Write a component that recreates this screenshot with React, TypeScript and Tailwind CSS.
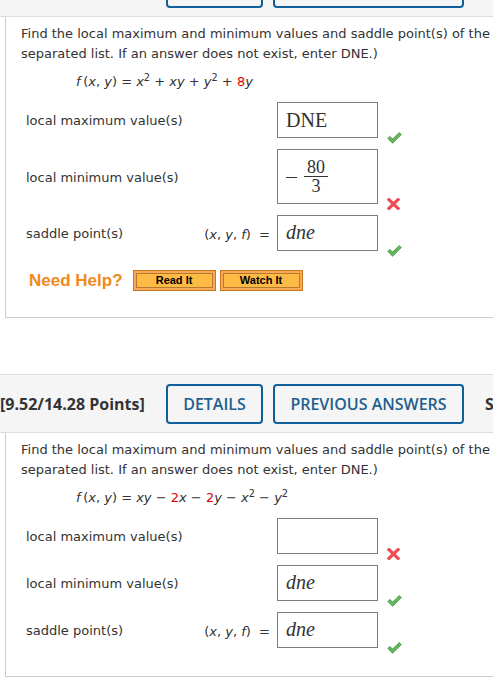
import React from "react";

function Check() {
    return (
        <svg width="15" height="12" viewBox="0 0 15 12">
            <path d="M0.8 6.4 L2.9 4.4 L5.6 7.1 L12.3 0.6 L14.3 2.6 L5.6 11.2 Z" fill="#64b95a" stroke="#3f8c3f" strokeWidth="0.8" strokeLinejoin="round" />
        </svg>
    );
}

function Cross() {
    return (
        <svg width="13" height="12" viewBox="0 0 13 12">
            <path d="M2 1.6 L11 10.4 M11 1.6 L2 10.4" stroke="#ee4d55" strokeWidth="3.2" strokeLinecap="square" />
        </svg>
    );
}

// stub = the header of the question above, scrolled mostly out of view (only button edges show)
function Header({ stub }: { stub?: boolean }) {
    return (
        <div className="flex h-[59px] items-center overflow-hidden whitespace-nowrap border-y border-[#dddddd] bg-[#f5f5f5] font-['Open_Sans',sans-serif]">
            <span className="w-[166px] shrink-0 text-[16px] font-bold text-[#333]">{!stub && "[9.52/14.28 Points]"}</span>
            <div className="flex h-[40px] w-[97px] shrink-0 items-center justify-center rounded-[4px] border-2 border-[#10609a] text-[16px] font-semibold text-[#1f5f8f]">
                {!stub && "DETAILS"}
            </div>
            <div className="ml-[10px] flex h-[40px] w-[191px] shrink-0 items-center justify-center rounded-[4px] border-2 border-[#10609a] text-[16px] font-semibold text-[#1f5f8f]">
                {!stub && "PREVIOUS ANSWERS"}
            </div>
            {!stub && <span className="ml-[21px] shrink-0 text-[16px] font-bold text-[#333]">SUBMISSIONS</span>}
        </div>
    );
}

function Box({ h, children }: { h: string; children?: React.ReactNode }) {
    return (
        <div className={`flex w-[101px] shrink-0 items-center border border-[#7d7d7d] bg-white pl-[8px] font-['Liberation_Serif',serif] text-[#333] ${h}`}>
            {children}
        </div>
    );
}

function Row({ label, prefix, mark, h = "h-[36px]", children }: { label: string; prefix?: boolean; mark: "ok" | "bad"; h?: string; children?: React.ReactNode }) {
    return (
        <div className="flex">
            <div className="flex w-[256px] shrink-0 items-center justify-between pl-[5px] pr-[7px]">
                <span className="pt-[2px]">{label}</span>
                {prefix && (
                    <span className="pt-[3px]">
                        (<i>x</i>, <i>y</i>, <i>f</i>)&nbsp; =
                    </span>
                )}
            </div>
            <Box h={h}>{children}</Box>
            <div className="-mb-[6px] ml-[9px] self-end">{mark === "ok" ? <Check /> : <Cross />}</div>
        </div>
    );
}

function Intro() {
    return (
        <>
            <p className="whitespace-nowrap">
                Find the local maximum and minimum values and saddle point(s) of the function. (Enter your answers as a comma-
            </p>
            <p>separated list. If an answer does not exist, enter DNE.)</p>
        </>
    );
}

function Dne() {
    return <span className="mb-[2px] text-[20px] italic">dne</span>;
}

export default function App() {
    return (
        <div className="h-[677px] w-[493px] overflow-hidden bg-white font-['DejaVu_Sans',Verdana,sans-serif] text-[13px] leading-[20px] text-[#333]">
            <div className="-mt-[42px]">
                <Header stub />
            </div>

            <div className="ml-[5px] overflow-hidden border-b border-l border-[#cccccc] pb-[26px] pl-[15px] pt-[7px]">
                <Intro />
                <div className="ml-[55px] mt-[8px] whitespace-nowrap">
                    <i>f</i>&thinsp;(<i>x</i>, <i>y</i>) = <i>x</i>
                    <sup>2</sup> + <i>xy</i> + <i>y</i>
                    <sup>2</sup> + <span className="text-[#e00000]">8</span>
                    <i>y</i>
                </div>

                <div className="mt-[10px] flex flex-col gap-[11px]">
                    <Row label="local maximum value(s)" mark="ok">
                        <span className="text-[20px]">DNE</span>
                    </Row>
                    <Row label="local minimum value(s)" mark="bad" h="h-[55px]">
                        <span className="flex items-center text-[18px]">
                            <span className="mt-[1px] h-[1px] w-[11px] bg-[#333]" />
                            <span className="ml-[7px] flex flex-col items-center">
                                <span className="border-b border-[#333] px-[3px] leading-[18px]">80</span>
                                <span className="leading-[19px]">3</span>
                            </span>
                        </span>
                    </Row>
                    <Row label="saddle point(s)" prefix mark="ok">
                        <Dne />
                    </Row>
                </div>

                <div className="ml-[8px] mt-[19px] flex h-[21px] items-center">
                    <span className="font-['Liberation_Sans',Arial,sans-serif] text-[17px] font-bold text-[#f08a1c]">Need Help?</span>
                    <div className="ml-[10px] flex gap-[4px] font-['Liberation_Sans',Arial,sans-serif] text-[11px] font-bold text-black">
                        <div className="h-[21px] w-[83px] border border-[#c8781f] bg-[#f9a956] p-[2px]">
                            <div className="flex h-full items-center justify-center border border-[#b8792f] bg-[#fdba45] leading-none">Read It</div>
                        </div>
                        <div className="h-[21px] w-[83px] border border-[#c8781f] bg-[#f9a956] p-[2px]">
                            <div className="flex h-full items-center justify-center border border-[#b8792f] bg-[#fdba45] leading-none">Watch It</div>
                        </div>
                    </div>
                </div>
            </div>

            <div className="mt-[56px]">
                <Header />
            </div>

            <div className="ml-[5px] overflow-hidden border-b border-l border-[#cccccc] pb-[28px] pl-[15px] pt-[7px]">
                <Intro />
                <div className="ml-[55px] mt-[8px] whitespace-nowrap">
                    <i>f</i>&thinsp;(<i>x</i>, <i>y</i>) = <i>xy</i> − <span className="text-[#e00000]">2</span>
                    <i>x</i> − <span className="text-[#e00000]">2</span>
                    <i>y</i> − <i>x</i>
                    <sup>2</sup> − <i>y</i>
                    <sup>2</sup>
                </div>

                <div className="mt-[10px] flex flex-col gap-[11px]">
                    <Row label="local maximum value(s)" mark="bad" />
                    <Row label="local minimum value(s)" mark="ok">
                        <Dne />
                    </Row>
                    <Row label="saddle point(s)" prefix mark="ok">
                        <Dne />
                    </Row>
                </div>
            </div>
        </div>
    );
}
